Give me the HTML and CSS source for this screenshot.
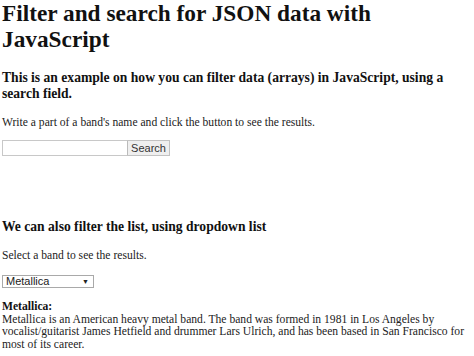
FILE: index.html
```html
<!DOCTYPE html>
<html lang="en">
<head>
<meta charset="utf-8">
<title>Filter and search for JSON data with JavaScript</title>
<link rel="stylesheet" href="styles.css">
</head>
<body>
<main class="page">
  <h1 class="title">Filter and search for JSON data with JavaScript</h1>
  <h3 class="subtitle">This is an example on how you can filter data (arrays) in JavaScript, using a search field.</h3>
  <p class="text">Write a part of a band's name and click the button to see the results.</p>
  <form class="search-row">
    <input class="search-input" type="text">
    <button class="search-btn" type="button">Search</button>
  </form>
  <h3 class="subtitle subtitle-second">We can also filter the list, using dropdown list</h3>
  <p class="text text-select">Select a band to see the results.</p>
  <div class="select-box">
    <span class="select-label">Metallica</span>
    <span class="select-arrow">&#9660;</span>
  </div>
  <div class="result">
    <b class="result-name">Metallica:</b><br>
    Metallica is an American heavy metal band. The band was formed in 1981 in Los Angeles by vocalist/guitarist James Hetfield and drummer Lars Ulrich, and has been based in San Francisco for most of its career.
  </div>
</main>
</body>
</html>
```

FILE: styles.css
```css
html, body {
  margin: 0;
  padding: 0;
  background: #fff;
}
body {
  font-family: "Liberation Serif", "Times New Roman", serif;
  color: #111;
}
.page {
  padding: 0 4px 0 2px;
  display: flex;
  flex-direction: column;
  align-items: flex-start;
}
.title {
  margin: 0;
  font-size: 23.3px;
  line-height: 26px;
  font-weight: bold;
}
.subtitle {
  margin: 18px 0 0;
  font-size: 13.6px;
  line-height: 16px;
  font-weight: bold;
}
.subtitle-second {
  margin-top: 63px;
}
.text {
  margin: 14px 0 0;
  font-size: 11.6px;
  line-height: 14px;
  color: #222;
}
.text-select {
  margin-top: 14px;
}
.search-row {
  margin: 10px 0 0;
  display: flex;
  align-items: stretch;
  height: 16px;
}
.search-input {
  box-sizing: border-box;
  width: 126px;
  height: 16px;
  margin: 0;
  padding: 0 2px;
  border: 1px solid #c8c8c8;
  border-right-color: #bbb;
  background: #fff;
  outline: none;
}
.search-btn {
  box-sizing: border-box;
  height: 16px;
  width: 42px;
  margin: 0;
  padding: 0;
  border: 1px solid #c2c2c2;
  border-left: none;
  background: #efefef;
  font-family: "Liberation Sans", Arial, sans-serif;
  font-size: 11px;
  line-height: 14px;
  color: #333;
}
.select-box {
  box-sizing: border-box;
  margin-top: 12px;
  width: 92px;
  height: 13px;
  border: 1px solid #a9a9a9;
  display: flex;
  align-items: center;
  justify-content: space-between;
  padding: 0 4px 0 3px;
  font-family: "Liberation Sans", Arial, sans-serif;
  font-size: 11px;
  line-height: 11px;
  color: #222;
}
.select-arrow {
  font-size: 7px;
  line-height: 7px;
}
.result {
  margin-top: 13px;
  font-size: 11.6px;
  line-height: 12.5px;
  color: #222;
}
.result-name {
  color: #111;
}
```
